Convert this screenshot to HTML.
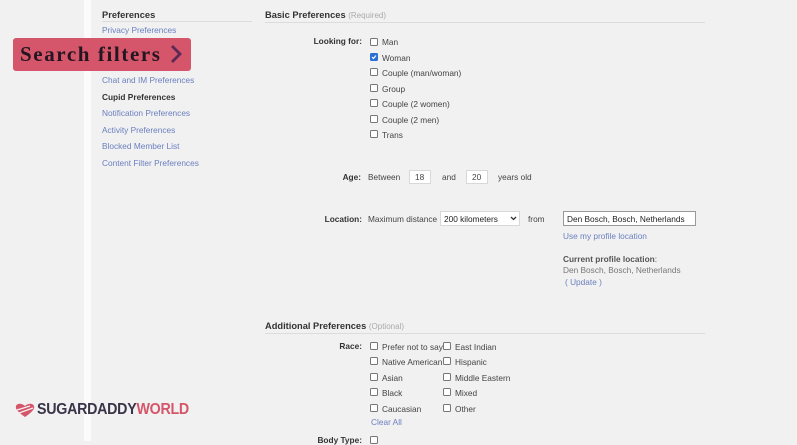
<!DOCTYPE html>
<html><head><meta charset="utf-8"><style>
*{margin:0;padding:0;box-sizing:border-box}
body{width:797px;height:441px;overflow:hidden;background:#f1f1f1;font-family:"Liberation Sans",sans-serif;color:#444;position:relative}
.a{position:absolute;white-space:nowrap;font-size:8.3px;line-height:10px}
.lk{color:#6a7fbf}
.b{font-weight:bold;color:#333}
.cb{position:absolute;width:8px;height:8px;border:1px solid #777;border-radius:1.5px;background:#fff}
.lbl{position:absolute;text-align:right;width:100px;font-weight:bold;font-size:8.3px;color:#333;line-height:10px}
.box{position:absolute;background:#fff;border:1px solid #d8d8d8}
</style></head><body>
<div style="position:absolute;left:84px;top:0;width:7px;height:441px;background:#fbfbfb"></div>
<div class="a b" style="left:102px;top:10px;font-size:9.3px">Preferences</div>
<div style="position:absolute;left:102px;top:21px;width:150px;height:1px;background:#dcdcdc"></div>
<div class="a lk" style="left:102px;top:25px">Privacy Preferences</div>
<div class="a lk" style="left:102px;top:59px">Profile Preferences</div>
<div class="a lk" style="left:102px;top:75px">Chat and IM Preferences</div>
<div class="a b" style="left:102px;top:92px">Cupid Preferences</div>
<div class="a lk" style="left:102px;top:108px">Notification Preferences</div>
<div class="a lk" style="left:102px;top:125px">Activity Preferences</div>
<div class="a lk" style="left:102px;top:141px">Blocked Member List</div>
<div class="a lk" style="left:102px;top:158px">Content Filter Preferences</div>

<div style="position:absolute;left:13px;top:38px;width:178px;height:33px;background:#d5566a;border-radius:3px"></div>
<div class="a" style="left:20px;top:41px;font-family:'Liberation Serif',serif;font-weight:bold;font-size:21px;line-height:26px;color:#241620;letter-spacing:1.6px">Search filters</div>
<svg style="position:absolute;left:168px;top:44px" width="16" height="20"><path d="M4 2 L12 10 L4 18" fill="none" stroke="#5a2a55" stroke-width="2.8"/></svg>

<div class="a b" style="left:265px;top:10px;font-size:9.3px">Basic Preferences <span style="font-weight:normal;color:#aaa;font-size:8px">(Required)</span></div>
<div style="position:absolute;left:265px;top:22px;width:440px;height:1px;background:#dcdcdc"></div>
<div class="lbl" style="left:262px;top:36px">Looking for:</div>
<div class="cb" style="left:370px;top:38px"></div><div class="a" style="left:382px;top:37px">Man</div>
<div class="cb" style="left:370px;top:53px;background:#2a6fd6;border-color:#2a6fd6"></div>
<svg style="position:absolute;left:371px;top:54px" width="6" height="6"><path d="M1 3 L2.5 4.5 L5 1.5" fill="none" stroke="#fff" stroke-width="1.2"/></svg>
<div class="a" style="left:382px;top:53px">Woman</div>
<div class="cb" style="left:370px;top:68px"></div><div class="a" style="left:382px;top:68px">Couple (man/woman)</div>
<div class="cb" style="left:370px;top:84px"></div><div class="a" style="left:382px;top:84px">Group</div>
<div class="cb" style="left:370px;top:99px"></div><div class="a" style="left:382px;top:99px">Couple (2 women)</div>
<div class="cb" style="left:370px;top:115px"></div><div class="a" style="left:382px;top:115px">Couple (2 men)</div>
<div class="cb" style="left:370px;top:130px"></div><div class="a" style="left:382px;top:130px">Trans</div>

<div class="lbl" style="left:261px;top:172px">Age:</div>
<div class="a" style="left:368px;top:172px">Between</div>
<div class="box" style="left:409px;top:170px;width:22px;height:14px"></div><div class="a" style="left:415px;top:172px">18</div>
<div class="a" style="left:442px;top:172px">and</div>
<div class="box" style="left:466px;top:170px;width:22px;height:14px"></div><div class="a" style="left:472px;top:172px">20</div>
<div class="a" style="left:498px;top:172px">years old</div>

<div class="lbl" style="left:262px;top:214px">Location:</div>
<div class="a" style="left:368px;top:214px">Maximum distance</div>
<div class="box" style="left:440px;top:211px;width:80px;height:15px"></div><div class="a" style="left:444px;top:214px;color:#222">200 kilometers</div>
<svg style="position:absolute;left:510px;top:216px" width="7" height="5"><path d="M1 1 L3.5 3.5 L6 1" fill="none" stroke="#333" stroke-width="1.3"/></svg>
<div class="a" style="left:528px;top:214px">from</div>
<div class="box" style="left:563px;top:211px;width:133px;height:15px;border-color:#999"></div><div class="a" style="left:567px;top:214px;color:#222">Den Bosch, Bosch, Netherlands</div>
<div class="a lk" style="left:563px;top:231px">Use my profile location</div>
<div class="a" style="left:563px;top:254px"><b style="color:#555">Current profile location</b>:</div>
<div class="a" style="left:563px;top:265px;color:#777">Den Bosch, Bosch, Netherlands</div>
<div class="a lk" style="left:565px;top:277px">( Update )</div>

<div class="a b" style="left:265px;top:321px;font-size:9.3px">Additional Preferences <span style="font-weight:normal;color:#aaa;font-size:8px">(Optional)</span></div>
<div style="position:absolute;left:265px;top:333px;width:440px;height:1px;background:#dcdcdc"></div>
<div class="lbl" style="left:262px;top:341px">Race:</div>
<div class="cb" style="left:370px;top:342px"></div><div class="a" style="left:382px;top:342px">Prefer not to say</div>
<div class="cb" style="left:443px;top:342px"></div><div class="a" style="left:455px;top:342px">East Indian</div>
<div class="cb" style="left:370px;top:357px"></div><div class="a" style="left:382px;top:357px">Native American</div>
<div class="cb" style="left:443px;top:357px"></div><div class="a" style="left:455px;top:357px">Hispanic</div>
<div class="cb" style="left:370px;top:373px"></div><div class="a" style="left:382px;top:373px">Asian</div>
<div class="cb" style="left:443px;top:373px"></div><div class="a" style="left:455px;top:373px">Middle Eastern</div>
<div class="cb" style="left:370px;top:388px"></div><div class="a" style="left:382px;top:388px">Black</div>
<div class="cb" style="left:443px;top:388px"></div><div class="a" style="left:455px;top:388px">Mixed</div>
<div class="cb" style="left:370px;top:404px"></div><div class="a" style="left:382px;top:404px">Caucasian</div>
<div class="cb" style="left:443px;top:404px"></div><div class="a" style="left:455px;top:404px">Other</div>
<div class="a lk" style="left:371px;top:417px">Clear All</div>
<div class="lbl" style="left:262px;top:435px">Body Type:</div>
<div class="cb" style="left:370px;top:436px"></div>

<svg style="position:absolute;left:14px;top:402px" width="22" height="16"><path d="M11 15 C4 10 1 7 2 4 C3 1 8 1 11 4 C14 1 19 1 20 4 C21 7 18 10 11 15Z" fill="#d5566a"/><path d="M3 8 L16 4 M5 11 L19 6" stroke="#f1f1f1" stroke-width="1.2"/></svg>
<div class="a" style="left:37px;top:401px;font-size:15.5px;line-height:18px;font-weight:bold;color:#3a3448;letter-spacing:-0.3px;transform:scaleX(0.92);transform-origin:0 0">SUGARDADDY<span style="color:#d5566a;font-weight:bold">WORLD</span></div>
</body></html>
